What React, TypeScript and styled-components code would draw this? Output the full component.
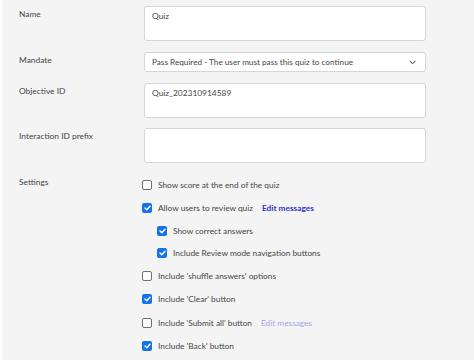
import React from "react";
import styled, { createGlobalStyle } from "styled-components";

const Global = createGlobalStyle`
  html, body { margin: 0; padding: 0; background: #ffffff; }
  body { font-family: Lato, "Open Sans", sans-serif; }
`;

const Panel = styled.div`
  margin-left: 2px;
  width: 472px;
  height: 360px;
  background: #f4f4f4;
  box-sizing: border-box;
  padding: 6px 0 0 17px;
  display: grid;
  grid-template-columns: 125px 282px;
  align-content: start;
`;

const Label = styled.div<{ $top?: number }>`
  font-size: 8.4px;
  color: #454545;
  padding-top: ${(p) => p.$top ?? 2}px;
  line-height: 12px;
`;

const Field = styled.div<{ $gap?: number }>`
  margin-bottom: ${(p) => p.$gap ?? 10}px;
`;

const TextBox = styled.div`
  box-sizing: border-box;
  height: 35px;
  background: #ffffff;
  border: 1px solid #d6d6d6;
  border-radius: 3px;
  padding: 3px 7px;
  font-size: 8.4px;
  line-height: 12px;
  color: #454545;
`;

const Select = styled.div`
  box-sizing: border-box;
  height: 20px;
  background: #ffffff;
  border: 1px solid #d6d6d6;
  border-radius: 3px;
  padding: 0 9px 0 7px;
  display: flex;
  align-items: center;
  justify-content: space-between;
  font-size: 8.2px;
  color: #454545;
`;

const Options = styled.div`
  margin-left: -2px;
  display: flex;
  flex-direction: column;
`;

const Option = styled.div<{ $sub?: boolean }>`
  display: flex;
  align-items: center;
  height: ${(p) => (p.$sub ? 21.8 : 23.6)}px;
  padding-left: ${(p) => (p.$sub ? 15 : 0)}px;
  font-size: 8.3px;
  color: #454545;
`;

const Box = styled.span<{ $on?: boolean }>`
  box-sizing: border-box;
  width: 10px;
  height: 10px;
  border-radius: 2px;
  flex: none;
  margin-right: 6px;
  display: flex;
  align-items: center;
  justify-content: center;
  background: ${(p) => (p.$on ? "#1473e6" : "#ffffff")};
  border: ${(p) => (p.$on ? "none" : "1.3px solid #707070")};
`;

const EditLink = styled.span<{ $disabled?: boolean }>`
  margin-left: 9px;
  font-weight: ${(p) => (p.$disabled ? 400 : 700)};
  color: ${(p) => (p.$disabled ? "#a4a4e4" : "#3232c8")};
`;

const Check = () => (
  <svg width="7" height="6" viewBox="0 0 7 6">
    <path d="M1 3.1 L2.8 4.8 L6 1.2" fill="none" stroke="#fff" strokeWidth="1.4" strokeLinecap="round" strokeLinejoin="round" />
  </svg>
);

const Chevron = () => (
  <svg width="7" height="5" viewBox="0 0 7 5">
    <path d="M1 1.2 L3.5 3.6 L6 1.2" fill="none" stroke="#6e6e6e" strokeWidth="1.1" strokeLinecap="round" strokeLinejoin="round" />
  </svg>
);

type Opt = { text: string; on: boolean; sub?: boolean; edit?: "on" | "off" };

const opts: Opt[] = [
  { text: "Show score at the end of the quiz", on: false },
  { text: "Allow users to review quiz", on: true, edit: "on" },
  { text: "Show correct answers", on: true, sub: true },
  { text: "Include Review mode navigation buttons", on: true, sub: true },
  { text: "Include 'shuffle answers' options", on: false },
  { text: "Include 'Clear' button", on: true },
  { text: "Include 'Submit all' button", on: false, edit: "off" },
  { text: "Include 'Back' button", on: true },
];

export default function App() {
  return (
    <>
      <Global />
      <Panel>
        <Label>Name</Label>
        <Field $gap={11}>
          <TextBox>Quiz</TextBox>
        </Field>
        <Label>Mandate</Label>
        <Field $gap={11}>
          <Select>
            <span>Pass Required - The user must pass this quiz to continue</span>
            <Chevron />
          </Select>
        </Field>
        <Label>Objective ID</Label>
        <Field>
          <TextBox>Quiz_202310914589</TextBox>
        </Field>
        <Label>Interaction ID prefix</Label>
        <Field $gap={10}>
          <TextBox />
        </Field>
        <Label $top={3}>Settings</Label>
        <Options>
          {opts.map((o) => (
            <Option key={o.text} $sub={o.sub}>
              <Box $on={o.on}>{o.on && <Check />}</Box>
              <span>{o.text}</span>
              {o.edit && <EditLink $disabled={o.edit === "off"}>Edit messages</EditLink>}
            </Option>
          ))}
        </Options>
      </Panel>
    </>
  );
}
